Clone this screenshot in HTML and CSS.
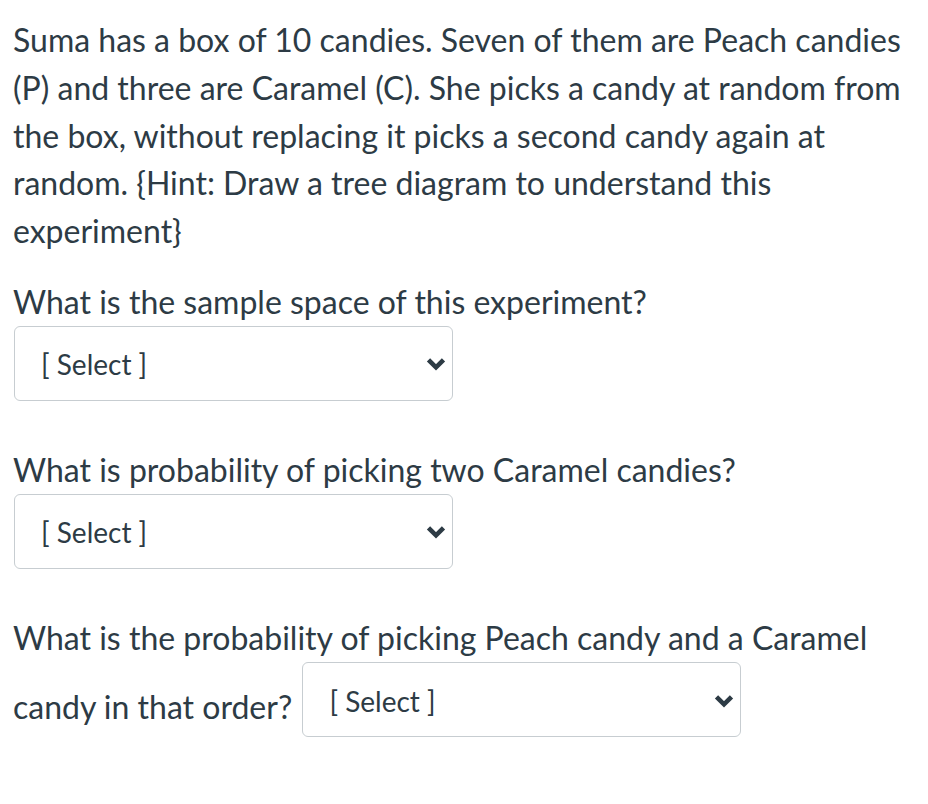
FILE: index.html
```html
<!DOCTYPE html>
<html>
<head>
<meta charset="utf-8">
<link rel="stylesheet" href="styles.css">
</head>
<body>
<div class="content">
  <p class="intro">Suma has a box of 10 candies. Seven of them are Peach candies (P) and three are Caramel (C). She picks a candy at random from the box, without replacing it picks a second candy again at random. {Hint: Draw a tree diagram to understand this experiment}</p>
  <p class="q">What is the sample space of this experiment?</p>
  <div class="select block"><span class="label">[ Select ]</span><svg class="chev" width="20" height="14" viewBox="0 0 20 14"><path d="M2.5 2.8 L10 10.3 L17.5 2.8" fill="none" stroke="#2d3b45" stroke-width="4.6"/></svg></div>
  <p class="q gap">What is probability of picking two Caramel candies?</p>
  <div class="select block"><span class="label">[ Select ]</span><svg class="chev" width="20" height="14" viewBox="0 0 20 14"><path d="M2.5 2.8 L10 10.3 L17.5 2.8" fill="none" stroke="#2d3b45" stroke-width="4.6"/></svg></div>
  <p class="q gap last">What is the probability of picking Peach candy and a Caramel candy in that order? <span class="select inline"><span class="label">[ Select ]</span><svg class="chev" width="20" height="14" viewBox="0 0 20 14"><path d="M2.5 2.8 L10 10.3 L17.5 2.8" fill="none" stroke="#2d3b45" stroke-width="4.6"/></svg></span></p>
</div>
</body>
</html>
```
FILE: styles.css
```css
html, body {
  margin: 0;
  padding: 0;
  background: #ffffff;
}
.content {
  padding: 16px 13px 0 13px;
  font-family: Lato, "Noto Sans", sans-serif;
  font-size: 32px;
  line-height: 47.8px;
  color: #2d3b45;
}
.intro {
  margin: 0 0 23px 0;
}
.q {
  margin: 0;
}
.q.gap {
  margin-top: 45px;
}
.select {
  box-sizing: border-box;
  width: 439px;
  height: 75px;
  border: 1px solid #c7cdd1;
  border-radius: 6px;
  background: #fff;
  display: flex;
  align-items: center;
  justify-content: space-between;
  padding: 2px 6px 0 26px;
}
.select.block {
  margin-left: 1px;
}
.select.inline {
  display: inline-flex;
  vertical-align: 7px;
  margin-top: 1px;
  margin-left: 2px;
}
.label {
  font-size: 28px;
  line-height: 30px;
  color: #2d3b45;
}
.chev {
  display: block;
}
```
